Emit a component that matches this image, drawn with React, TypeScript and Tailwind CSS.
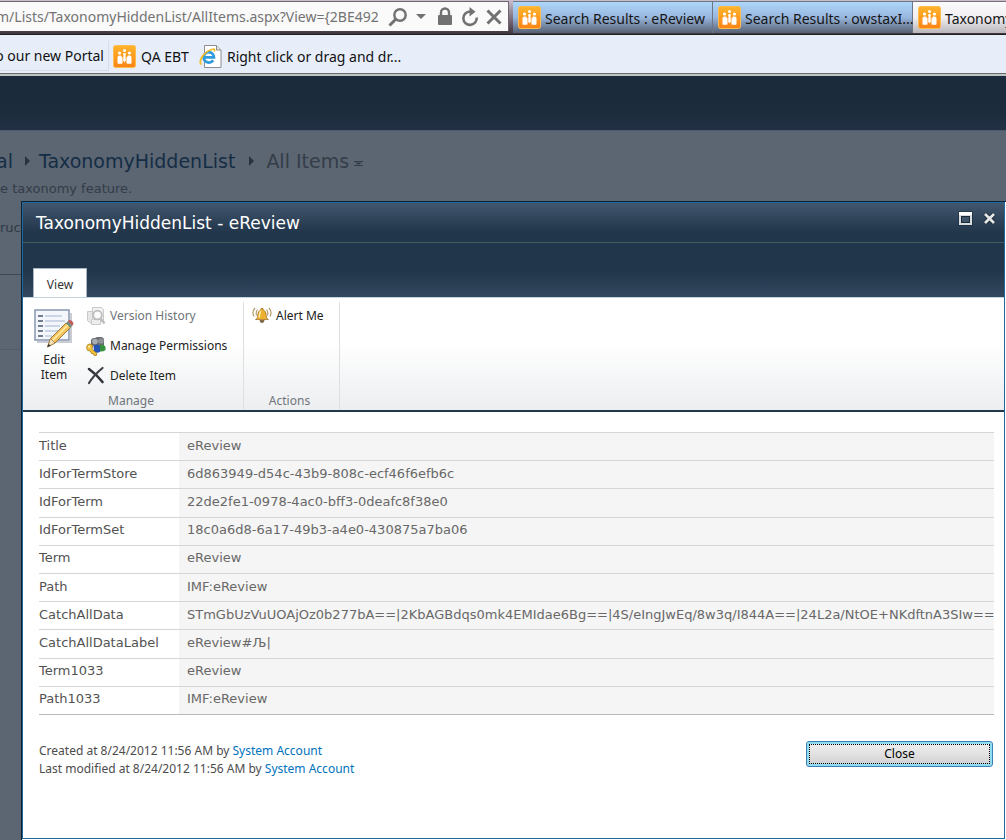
import type { ReactNode } from "react";

const fields = [
  { name: "Title", value: "eReview" },
  { name: "IdForTermStore", value: "6d863949-d54c-43b9-808c-ecf46f6efb6c" },
  { name: "IdForTerm", value: "22de2fe1-0978-4ac0-bff3-0deafc8f38e0" },
  { name: "IdForTermSet", value: "18c0a6d8-6a17-49b3-a4e0-430875a7ba06" },
  { name: "Term", value: "eReview" },
  { name: "Path", value: "IMF:eReview" },
  {
    name: "CatchAllData",
    value:
      "STmGbUzVuUOAjOz0b277bA==|2KbAGBdqs0mk4EMIdae6Bg==|4S/eIngJwEq/8w3q/I844A==|24L2a/NtOE+NKdftnA3SIw==",
  },
  { name: "CatchAllDataLabel", value: "eReview#Љ|" },
  { name: "Term1033", value: "eReview" },
  { name: "Path1033", value: "IMF:eReview" },
];

const PortalIcon = () => (
  <svg className="size-[23px] shrink-0" viewBox="0 0 23 23" aria-hidden="true">
    <defs>
      <linearGradient id="portal" x1="0" y1="0" x2="0" y2="1">
        <stop offset="0" stopColor="#ffb42c" />
        <stop offset="1" stopColor="#fb8415" />
      </linearGradient>
    </defs>
    <rect x="0.5" y="0.5" width="22" height="22" rx="2" fill="url(#portal)" stroke="#fdbc4d" />
    <g fill="#fff">
      <circle cx="6.5" cy="8" r="1.6" />
      <circle cx="11.5" cy="5.6" r="1.5" />
      <circle cx="16.5" cy="8" r="1.6" />
      <path d="M4.5 12.5q0-2 2-2h1.2l1.8 2V18q0 .8-.8.8H5.3q-.8 0-.8-.8zM18.5 12.5q0-2-2-2h-1.2l-1.8 2V18q0 .8.8.8h3.4q.8 0 .8-.8zM10 8.2h3l-.5 2.3.4 5-1.4 2-1.4-2 .4-5z" />
    </g>
  </svg>
);

const IePageIcon = () => (
  <svg className="size-[23px] shrink-0" viewBox="0 0 23 23" aria-hidden="true">
    <path d="M5.5.5h12L22 5v17.500H5.500z" fill="#fff" stroke="#8d8d8d" />
    <path d="M17.500.5V5H22" fill="#e6e6e6" stroke="#8d8d8d" />
    <path d="M14.200 15.200a5.200 5.200 0 1 1 .8-2.900H5.500" fill="none" stroke="#2f9bdc" strokeWidth="2.700" />
    <path d="M2.500 19.500C-1 18 3 8 12.500 4.500c3-1.100 4 .2 2.500 2" fill="none" stroke="#f3bd2b" strokeWidth="1.800" />
  </svg>
);

const SearchIcon = () => (
  <svg className="h-5 w-5" viewBox="0 0 20 20" fill="none" stroke="#717171" aria-hidden="true">
    <circle cx="12" cy="8" r="5.700" strokeWidth="2.400" />
    <path d="m8 12-6.500 6.500" strokeWidth="3" />
  </svg>
);

const LockIcon = () => (
  <svg className="h-5 w-4" viewBox="0 0 16 20" aria-hidden="true">
    <rect x="1" y="8" width="14" height="10" rx="1" fill="#717171" />
    <path d="M4 9V5.500a4 4 0 0 1 8 0V9" fill="none" stroke="#717171" strokeWidth="2.400" />
  </svg>
);

const RefreshIcon = () => (
  <svg className="h-5 w-[18px]" viewBox="0 0 18 20" aria-hidden="true">
    <path d="M15.700 10.500A6.700 6.700 0 1 1 9 4.500" fill="none" stroke="#717171" strokeWidth="2.600" />
    <path d="M8.500 0v9.500l6-4.700z" fill="#717171" />
  </svg>
);

const StopIcon = () => (
  <svg className="h-4 w-4" viewBox="0 0 16 16" aria-hidden="true">
    <path d="m1.500 1.500 13 13m0-13-13 13" stroke="#717171" strokeWidth="3" />
  </svg>
);

const EditIcon = () => (
  <svg className="h-10 w-10" viewBox="0 0 40 40" aria-hidden="true">
    <path d="M3 34h34V5" fill="none" stroke="#c9ccd2" strokeWidth="2" />
    <rect x="1" y="2" width="34" height="30" fill="#f3f7fc" stroke="#8896b0" strokeWidth="1.500" />
    <path d="M4 8h5M4 13h5M4 18h5M4 23h5M4 28h5" stroke="#49566f" strokeWidth="1.400" />
    <path d="M11 8h17M11 13h20M11 18h15M11 23h13M11 28h7" stroke="#a3b4cf" strokeWidth="1.200" />
    <path d="m13.500 39 3-8.500L32 15l4.500 4.500L21 35z" fill="#f3c35a" stroke="#87652c" strokeWidth=".8" />
    <path d="m18.500 32.500 15.500-15.500" stroke="#fff0ae" strokeWidth="1.500" />
    <path d="m13.500 39 3-8.500 4.500 4.500z" fill="#f5dfba" stroke="#87652c" strokeWidth=".6" />
    <path d="m13.500 39 1.100-3.200 2 2z" fill="#333" />
    <path d="m32 15 1.800-1.800 4.500 4.500-1.800 1.800z" fill="#6d9280" />
    <path d="m33.800 13.200 1-.9q1.200-.9 2.600.3l1.500 1.500q1 1.400.2 2.600l-.9 1z" fill="#bf5b5b" />
  </svg>
);

const VersionIcon = () => (
  <svg className="size-5 shrink-0" viewBox="0 0 20 20" aria-hidden="true">
    <path d="M6.500 1.500h9l2 2v12h-11z" fill="#f4f4f4" stroke="#c8c8c8" />
    <path d="M1.500 5.500h5v11h-3l-2-2z" fill="#e6e6e6" stroke="#c8c8c8" />
    <path d="M5.500 13.500h9v5h-9z" fill="#eee" stroke="#cbcbcb" />
    <circle cx="11.500" cy="9" r="4.300" fill="#fafafa" stroke="#bcbcbc" strokeWidth="1.800" />
    <path d="m14.500 12.500 4 5" stroke="#bebebe" strokeWidth="2.600" />
  </svg>
);

const PermissionsIcon = () => (
  <svg className="size-5 shrink-0" viewBox="0 0 20 20" aria-hidden="true">
    <path d="M5 9V4q1-2.500 4-2 2-1.500 4.500-1Q18 .5 18 4v5l-5 3z" fill="#676b70" />
    <circle cx="9" cy="5.500" r="2.800" fill="#a9adb1" />
    <circle cx="15" cy="5" r="2.800" fill="#8e9397" />
    <path d="M12.500 10q5-3 7 1v3q-2 2-6 1.500z" fill="#36913f" />
    <path d="M7.500 10q4-3 6.500 0v6q-3 1.500-6 0z" fill="#2553b8" />
    <path d="M1 9.500q2.500-3 5-.5 1.500 2-.3 4l5 4.200-.3 2.300-2.400-.2-.6-1.500-2-.4-1-2.400-2.700-.5q-1.700-2-.7-5z" fill="#f1c23a" stroke="#a57a18" strokeWidth=".8" />
    <circle cx="3.200" cy="10.800" r="1" fill="#fff6c4" />
  </svg>
);

const DeleteIcon = () => (
  <svg className="size-5 shrink-0" viewBox="0 0 20 20" aria-hidden="true">
    <path d="M3 3q7 5 13.500 13" fill="none" stroke="#303238" strokeWidth="2.600" strokeLinecap="round" />
    <path d="M16.500 2Q8 9 3 17" fill="none" stroke="#3d4046" strokeWidth="2.200" strokeLinecap="round" />
  </svg>
);

const AlertIcon = () => (
  <svg className="size-5 shrink-0" viewBox="0 0 20 20" aria-hidden="true">
    <path d="M3 2Q-.5 6 2 10.500M5.500 3.500Q3.500 6 4.500 9.500M17 2q3.500 4 1 8.500M14.500 3.500q2 2.500 1 6" fill="none" stroke="#b49a6b" strokeWidth="1.200" />
    <path d="M9 2.500h2l.4 1.500q2.800 1 2.800 5t2.300 4.500h-13q2.300-.5 2.300-4.500T8.600 4z" fill="#eeb02f" stroke="#9a6c1d" strokeWidth=".7" />
    <path d="M8.800 5q-1.500 2-1.500 6.500" fill="none" stroke="#fff0b0" strokeWidth="1.500" />
    <path d="M7.500 14h5q-.5 3-2.500 3t-2.500-3z" fill="#7e6743" />
  </svg>
);

const BrowserTab = ({ label, active = false }: { label: string; active?: boolean }) => (
  <button
    type="button"
    className={
      active
        ? "flex h-8 w-[200px] shrink-0 items-start gap-1 border-t border-[#77727c] bg-linear-to-b from-[#fbfafc] via-[#f1eff2] to-[#b9b6bb] pt-1 pl-[5px] text-left"
        : "flex h-8 w-[200px] shrink-0 items-start gap-1 border-t border-r border-[#6d7685] bg-linear-to-b from-[#aed6fb] via-[#98b7de] to-[#596173] pt-1 pl-[5px] text-left"
    }
  >
    <PortalIcon />
    <span className="whitespace-nowrap leading-[26px]">{label}</span>
  </button>
);

const Browser = () => (
  <header className="font-['Noto_Sans','Open_Sans',sans-serif] text-[14px] text-[#151515]">
    <div className="flex h-[35px] overflow-hidden border-b border-[#222] bg-linear-to-b from-[#cdbfcd] to-[#40343f] pt-px">
      <div className="flex h-[30px] w-[509px] shrink-0 items-center border-t border-r border-[#6d6670] bg-[#fafafa]">
        <input
          aria-label="Address"
          readOnly
          value="m/Lists/TaxonomyHiddenList/AllItems.aspx?View={2BE492"
          className="-ml-1 w-[386px] shrink-0 bg-transparent text-[#737373] outline-none"
        />
        <div className="flex items-center">
          <button type="button" aria-label="Search" className="ml-1.5">
            <SearchIcon />
          </button>
          <button type="button" aria-label="Search options" className="ml-2">
            <svg className="h-[5px] w-[10px]" viewBox="0 0 10 5" aria-hidden="true">
              <path d="M0 0h10L5 5z" fill="#717171" />
            </svg>
          </button>
          <button type="button" aria-label="Security report" className="ml-[11px]">
            <LockIcon />
          </button>
          <button type="button" aria-label="Refresh" className="ml-2">
            <RefreshIcon />
          </button>
          <button type="button" aria-label="Stop" className="ml-[7px]">
            <StopIcon />
          </button>
        </div>
      </div>
      <nav aria-label="Tabs" className="ml-1 flex">
        <BrowserTab label="Search Results : eReview" />
        <BrowserTab label="Search Results : owstaxI..." />
        <BrowserTab label="TaxonomyHiddenList" active />
      </nav>
    </div>
    <nav aria-label="Favorites" className="flex h-[39px] items-center border-b border-[#686868] bg-[#e7eefa] pt-1 text-[#111]">
      <a href="#portal" className="flex h-[30px] w-[109px] items-center justify-end border-r border-b border-[#d5deed] pr-1 whitespace-nowrap">
        to our new Portal
      </a>
      <a href="#qa" className="ml-1 flex items-center gap-[5px] whitespace-nowrap">
        <PortalIcon />
        QA EBT
      </a>
      <a href="#hint" className="ml-2.5 flex items-center gap-[5px] whitespace-nowrap">
        <IePageIcon />
        Right click or drag and dr...
      </a>
    </nav>
    <div className="h-0.5 bg-[#bfc4c6]" />
  </header>
);

const SitePage = () => (
  <div className="overflow-hidden font-['DejaVu_Sans',Verdana,sans-serif]">
    <div className="h-[54px] bg-linear-to-b from-[#1b2b3b] from-60% to-[#223044]" />
    <div className="h-[82px] border-t border-[#4b5e70] pt-4">
      <div className="-ml-1 flex items-center text-[19px] leading-7 whitespace-nowrap text-[#142d45]">
        <span>al</span>
        <svg className="ml-3 h-2.5 w-[5px]" viewBox="0 0 5 10" aria-hidden="true">
          <path d="M0 0v10l5-5z" fill="#29323c" />
        </svg>
        <a href="#list" className="ml-[9px]">TaxonomyHiddenList</a>
        <svg className="ml-3.5 h-2.5 w-[5px]" viewBox="0 0 5 10" aria-hidden="true">
          <path d="M0 0v10l5-5z" fill="#29323c" />
        </svg>
        <button type="button" className="ml-3 flex items-center gap-[5px] text-[#343d48]">
          All Items
          <svg className="mt-1 h-[5px] w-[9px]" viewBox="0 0 9 5" aria-hidden="true">
            <path d="M0 0h9v1H0zM1 1.500h7L4.500 4zM0 4h9v1H0z" fill="#343d48" />
          </svg>
        </button>
      </div>
      <p className="mt-1 text-[13px] leading-5 text-[#333c47]">e taxonomy feature.</p>
    </div>
    <div className="h-[63px] border-b border-[#3e4854] pt-1.5 text-[13px] leading-5 text-[#303945]">ruct</div>
    <div className="h-[75px] border-b border-[#525b67]" />
  </div>
);

const RibbonButton = ({ icon, label, disabled }: { icon: ReactNode; label: string; disabled?: boolean }) => (
  <button
    type="button"
    disabled={disabled}
    className="flex h-[30px] items-center gap-1 whitespace-nowrap text-[#222] disabled:text-[#6f7479]"
  >
    {icon}
    {label}
  </button>
);

const Ribbon = () => (
  <div className="font-['Noto_Sans','Open_Sans',sans-serif] text-[12px]">
    <div role="tablist" className="flex h-[54px] items-end bg-linear-to-b from-[#21364b] from-50% to-[#33475e] pl-2.5">
      <button type="button" role="tab" aria-selected="true" className="h-[29px] w-[54px] border border-b-0 border-[#a9b4bf] bg-white pt-1 text-[#333]">
        View
      </button>
    </div>
    <div className="flex h-[115px] border-t border-b-2 border-t-[#c2d4e2] border-b-[#21374c] bg-linear-to-b from-white from-40% to-[#eceef0] pt-1">
      <section aria-label="Manage" className="flex w-[221px] flex-col border-r border-[#dddfe2]">
        <div className="flex h-[91px]">
          <button type="button" className="flex w-[62px] flex-col items-center pt-1.5 text-[#222]">
            <EditIcon />
            <span className="mt-1 leading-[15px]">Edit<br />Item</span>
          </button>
          <div className="-mt-px ml-px flex flex-col">
            <RibbonButton icon={<VersionIcon />} label="Version History" disabled />
            <RibbonButton icon={<PermissionsIcon />} label="Manage Permissions" />
            <RibbonButton icon={<DeleteIcon />} label="Delete Item" />
          </div>
        </div>
        <div className="pr-1 text-center leading-4 text-[#70757b]">Manage</div>
      </section>
      <section aria-label="Actions" className="flex w-24 flex-col border-r border-[#dddfe2]">
        <div className="-mt-px h-[92px] pl-2">
          <RibbonButton icon={<AlertIcon />} label="Alert Me" />
        </div>
        <div className="pr-1 text-center leading-4 text-[#70757b]">Actions</div>
      </section>
    </div>
  </div>
);

const Dialog = () => (
  <div
    role="dialog"
    aria-labelledby="dialog-title"
    className="absolute top-[201px] right-0 bottom-0 left-[21px] flex flex-col border-t border-l border-[#0d2135] bg-white pr-px pb-px"
  >
    <div className="flex flex-1 flex-col border border-[#20679a]">
      <div className="flex h-10 items-center justify-between border-b border-[#3f5f5c] bg-linear-to-b from-[#42566d] to-[#21364b] to-75% pr-2 pl-[13px] font-['DejaVu_Sans',Verdana,sans-serif]">
        <h1 id="dialog-title" className="pt-0.5 text-[17px] text-white">TaxonomyHiddenList - eReview</h1>
        <div className="mb-2 flex items-center gap-2.5">
          <button type="button" aria-label="Maximize">
            <svg className="size-[15px]" viewBox="0 0 15 15" aria-hidden="true">
              <rect x=".5" y=".5" width="14" height="14" fill="#1a2939" />
              <path d="M1 1h13v13H1zM3 5v7h9V5z" fill="#d9dcdf" fillRule="evenodd" />
              <path d="M1 1h13v3H1z" fill="#fff" />
              <rect x="3.500" y="5.500" width="8" height="6" fill="#40546a" stroke="#1a2939" />
            </svg>
          </button>
          <button type="button" aria-label="Close dialog">
            <svg className="size-[13px]" viewBox="0 0 13 13" aria-hidden="true">
              <path d="m2 2 9 9m0-9-9 9" stroke="#15222f" strokeWidth="4.500" />
              <path d="m2 2 9 9m0-9-9 9" stroke="#e4e6e8" strokeWidth="2.800" />
            </svg>
          </button>
        </div>
      </div>
      <Ribbon />
      <div className="pt-5 pr-2.5 pl-4">
        <table className="h-[283px] w-full table-fixed border-collapse border-b border-[#b9b9b9] font-['DejaVu_Sans',Verdana,sans-serif] text-[13px] leading-5">
          <tbody>
            {fields.map((field) => (
              <tr key={field.name} className="border-t border-[#d5d5d5]">
                <th scope="row" className="w-[140px] pb-0.5 text-left font-normal text-[#525252]">{field.name}</th>
                <td className="bg-[#f5f5f5] pb-0.5 pl-2 whitespace-nowrap text-[#686868]">{field.value}</td>
              </tr>
            ))}
          </tbody>
        </table>
        <div className="flex items-start justify-between pt-[26px] pr-px font-['Noto_Sans','Open_Sans',sans-serif]">
          <div className="pt-px text-[12px] leading-[18px] text-[#4c4c4c]">
            <p>Created at 8/24/2012 11:56 AM by <a href="#account" className="text-[#0072bc]">System Account</a></p>
            <p>Last modified at 8/24/2012 11:56 AM by <a href="#account" className="text-[#0072bc]">System Account</a></p>
          </div>
          <button type="button" className="h-[26px] w-[187px] rounded-[3px] border border-[#3c7fb1] bg-linear-to-b from-[#f0f0f0] via-[#e2e2e2] to-[#cfcfcf] p-0.5 text-[12px] text-black shadow-[inset_0_0_0_2px_#8fdcf3]">
            <span className="flex h-full items-center justify-center border border-dotted border-black">Close</span>
          </button>
        </div>
      </div>
    </div>
  </div>
);

export default function App() {
  return (
    <div className="relative min-h-screen overflow-hidden bg-[#5c6672]">
      <Browser />
      <SitePage />
      <Dialog />
    </div>
  );
}
